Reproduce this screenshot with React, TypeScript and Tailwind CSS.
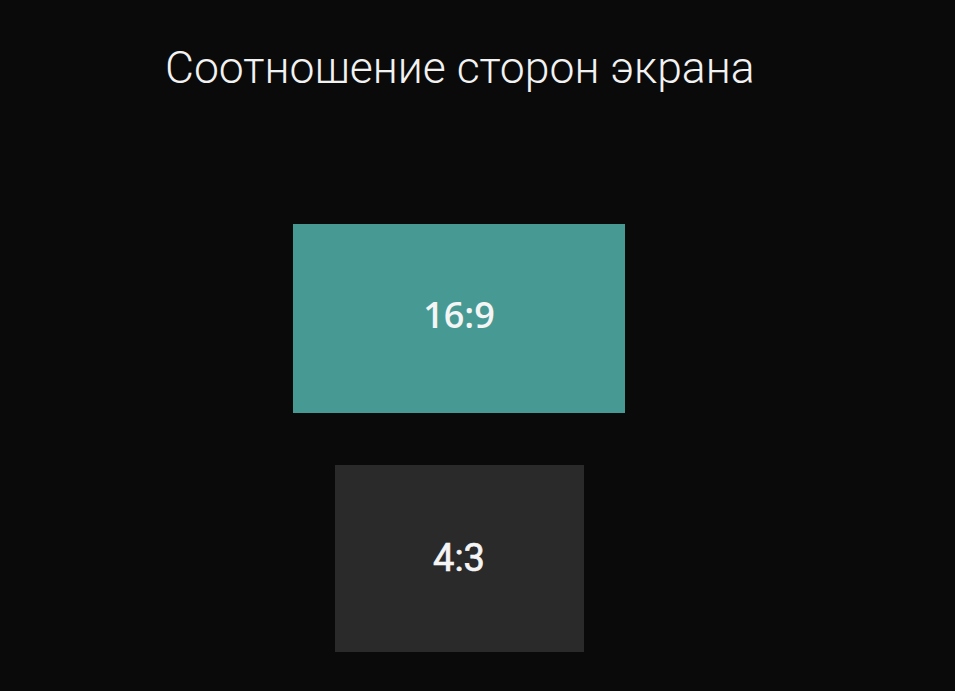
export default function App() {
  return (
    <div className="min-h-[691px] w-full bg-[#0a0a0a] flex flex-col">
      <h1
        className="pl-[165px] pt-[42px] text-[44.5px] leading-[52px] font-light text-[#f2f2f2] whitespace-nowrap"
        style={{ fontFamily: "Roboto, 'Noto Sans', sans-serif" }}
      >
        Соотношение сторон экрана
      </h1>
      <div className="ml-[293px] mt-[130px] w-[332px] flex flex-col items-center gap-[52px]">
        <div className="w-[332px] h-[189px] bg-[#479a93] flex items-center justify-center pb-[8px]">
          <span
            className="text-[36px] font-semibold text-[#f5f5f5]"
            style={{ fontFamily: "'Open Sans', 'Noto Sans', sans-serif" }}
          >
            16:9
          </span>
        </div>
        <div className="w-[249px] h-[187px] bg-[#2a2a2a] flex items-center justify-center">
          <span
            className="text-[38px] font-normal text-[#f5f5f5] [-webkit-text-stroke:0.7px_#f5f5f5]"
            style={{ fontFamily: "Roboto, sans-serif" }}
          >
            4:3
          </span>
        </div>
      </div>
    </div>
  );
}
